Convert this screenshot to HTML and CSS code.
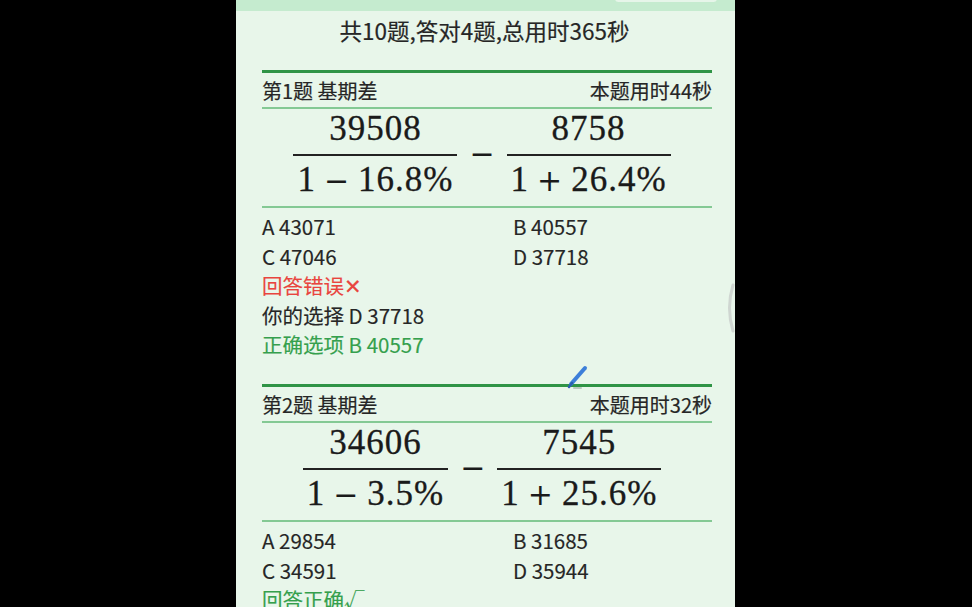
FILE: index.html
```html
<!DOCTYPE html>
<html lang="zh-CN">
<head>
<meta charset="utf-8">
<title>练习结果</title>
<link rel="stylesheet" href="styles.css">
</head>
<body>
<div class="screen">
  <div class="topband"><div class="pill"></div></div>
  <div class="summary">共10题,答对4题,总用时365秒</div>
  <div class="content">
    <section class="question">
      <div class="rule-thick"></div>
      <div class="qhead"><span class="qtitle">第1题 基期差</span><span class="qtime">本题用时44秒</span></div>
      <div class="rule"></div>
      <div class="expr">
        <div class="frac"><div class="num">39508</div><div class="bar"></div><div class="den">1<span class="bin">−</span>16.8%</div></div>
        <div class="op">−</div>
        <div class="frac"><div class="num">8758</div><div class="bar"></div><div class="den">1<span class="bin">+</span>26.4%</div></div>
      </div>
      <div class="rule"></div>
      <div class="opts">
        <div>A 43071</div><div>B 40557</div>
        <div>C 47046</div><div>D 37718</div>
        <div class="full wrong">回答错误✕</div>
        <div class="full">你的选择 D 37718</div>
        <div class="full right">正确选项 B 40557</div>
      </div>
    </section>
    <section class="question">
      <div class="rule-thick"></div>
      <div class="qhead"><span class="qtitle">第2题 基期差</span><span class="qtime">本题用时32秒</span></div>
      <div class="rule"></div>
      <div class="expr">
        <div class="frac"><div class="num">34606</div><div class="bar"></div><div class="den">1<span class="bin">−</span>3.5%</div></div>
        <div class="op">−</div>
        <div class="frac"><div class="num">7545</div><div class="bar"></div><div class="den">1<span class="bin">+</span>25.6%</div></div>
      </div>
      <div class="rule"></div>
      <div class="opts">
        <div>A 29854</div><div>B 31685</div>
        <div>C 34591</div><div>D 35944</div>
        <div class="full right">回答正确√</div>
      </div>
    </section>
  </div>
  <svg class="pen" viewBox="0 0 24 26" width="24" height="26">
    <path d="M9 23 L16 23" stroke="#b9c9c0" stroke-width="2" stroke-linecap="round"/>
    <path d="M20 3 L6 19" stroke="#3d7fd9" stroke-width="4" stroke-linecap="round"/>
    <path d="M7 18 L4 22" stroke="#2a5fb0" stroke-width="2.5" stroke-linecap="round"/>
  </svg>
  <svg class="scroll" viewBox="0 0 10 50" width="10" height="50">
    <path d="M8 2 Q1 25 8 48" stroke="#cfd6d1" stroke-width="3" fill="none" stroke-linecap="round"/>
  </svg>
</div>
</body>
</html>
```
FILE: styles.css
```css
html, body {
  margin: 0;
  padding: 0;
  background: #000;
  height: 607px;
  overflow: hidden;
}
.screen {
  position: relative;
  width: 499px;
  height: 607px;
  margin-left: 236px;
  background: #e8f6ea;
  overflow: hidden;
  font-family: "Noto Sans CJK SC", "Noto Sans", sans-serif;
  color: #262626;
}
.topband {
  height: 11px;
  background: #c5ebcf;
}
.pill {
  position: absolute;
  left: 379px;
  top: -5px;
  width: 102px;
  height: 7px;
  border-radius: 4px;
  background: #e6f5e9;
}
.summary {
  text-align: center;
  font-size: 22.5px;
  line-height: 38px;
  margin-bottom: 21px;
  padding-right: 2px;
  -webkit-text-stroke: 0.2px #262626;
}
.content {
  padding: 0 23px 0 26px;
}
.rule-thick {
  height: 3px;
  background: #2f9446;
}
.rule {
  height: 2px;
  background: #84c994;
}
.qhead {
  height: 34px;
  display: flex;
  justify-content: space-between;
  align-items: center;
  font-size: 20px;
  -webkit-text-stroke: 0.2px #262626;
}
.expr {
  height: 97px;
  display: flex;
  justify-content: center;
  align-items: flex-start;
  padding-right: 10px;
  box-sizing: border-box;
  padding-top: 1px;
  font-family: "Liberation Serif", "DejaVu Serif", serif;
  font-size: 35px;
  letter-spacing: 1px;
  color: #1a1a1a;
  -webkit-text-stroke: 0.3px #1a1a1a;
}
.frac {
  display: flex;
  flex-direction: column;
  align-items: center;
}
.num {
  line-height: 38px;
  padding-bottom: 6px;
}
.bar {
  align-self: stretch;
  height: 2px;
  background: #222;
}
.den {
  line-height: 38px;
  padding: 5px 4px 0;
  white-space: pre;
}
.bin {
  font-family: "DejaVu Sans", sans-serif;
  font-size: 30px;
  letter-spacing: 0;
  -webkit-text-stroke: 0;
  margin: 0 9px 0 8px;
}
.op {
  font-family: "DejaVu Sans", sans-serif;
  font-size: 30px;
  letter-spacing: 0;
  -webkit-text-stroke: 0;
  line-height: 38px;
  margin: 25px 12px 0;
}
.opts {
  display: grid;
  grid-template-columns: 251px 1fr;
  padding-top: 4px;
  padding-bottom: 24.5px;
  font-size: 20.5px;
  line-height: 29.5px;
  -webkit-text-stroke: 0.15px currentColor;
}
.opts .full {
  grid-column: 1 / 3;
}
.wrong {
  color: #e8453e;
}
.right {
  color: #35a04d;
}
.pen {
  position: absolute;
  left: 329px;
  top: 365px;
}
.scroll {
  position: absolute;
  left: 489px;
  top: 283px;
}
```
